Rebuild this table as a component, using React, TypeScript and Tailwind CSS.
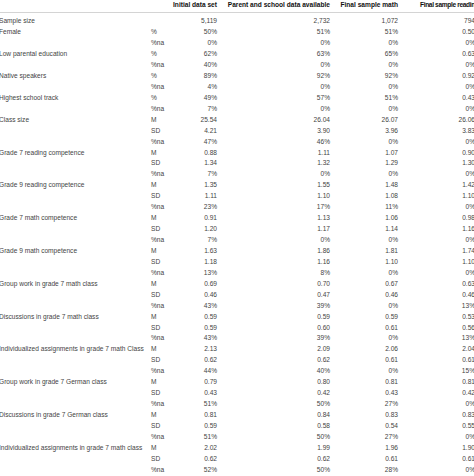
const columns = [
  "Initial data set",
  "Parent and school data available",
  "Final sample math",
];

type Row = [string, string, string, string, string, string];

const rows: Row[] = [
  ["Sample size", "", "5,119", "2,732", "1,072", "794"],
  ["Female", "%", "50%", "51%", "51%", "0.50"],
  ["", "%na", "0%", "0%", "0%", "0%"],
  ["Low parental education", "%", "62%", "63%", "65%", "0.63"],
  ["", "%na", "40%", "0%", "0%", "0%"],
  ["Native speakers", "%", "89%", "92%", "92%", "0.92"],
  ["", "%na", "4%", "0%", "0%", "0%"],
  ["Highest school track", "%", "49%", "57%", "51%", "0.43"],
  ["", "%na", "7%", "0%", "0%", "0%"],
  ["Class size", "M", "25.54", "26.04", "26.07", "26.06"],
  ["", "SD", "4.21", "3.90", "3.96", "3.83"],
  ["", "%na", "47%", "46%", "0%", "0%"],
  ["Grade 7 reading competence", "M", "0.88", "1.11", "1.07", "0.90"],
  ["", "SD", "1.34", "1.32", "1.29", "1.30"],
  ["", "%na", "7%", "0%", "0%", "0%"],
  ["Grade 9 reading competence", "M", "1.35", "1.55", "1.48", "1.42"],
  ["", "SD", "1.11", "1.10", "1.08", "1.10"],
  ["", "%na", "23%", "17%", "11%", "0%"],
  ["Grade 7 math competence", "M", "0.91", "1.13", "1.06", "0.98"],
  ["", "SD", "1.20", "1.17", "1.14", "1.16"],
  ["", "%na", "7%", "0%", "0%", "0%"],
  ["Grade 9 math competence", "M", "1.63", "1.86", "1.81", "1.74"],
  ["", "SD", "1.18", "1.16", "1.10", "1.10"],
  ["", "%na", "13%", "8%", "0%", "0%"],
  ["Group work in grade 7 math class", "M", "0.69", "0.70", "0.67", "0.63"],
  ["", "SD", "0.46", "0.47", "0.46", "0.46"],
  ["", "%na", "43%", "39%", "0%", "13%"],
  ["Discussions in grade 7 math class", "M", "0.59", "0.59", "0.59", "0.53"],
  ["", "SD", "0.59", "0.60", "0.61", "0.56"],
  ["", "%na", "43%", "39%", "0%", "13%"],
  ["Individualized assignments in grade 7 math Class", "M", "2.13", "2.09", "2.06", "2.04"],
  ["", "SD", "0.62", "0.62", "0.61", "0.61"],
  ["", "%na", "44%", "40%", "0%", "15%"],
  ["Group work in grade 7 German class", "M", "0.79", "0.80", "0.81", "0.81"],
  ["", "SD", "0.43", "0.42", "0.43", "0.42"],
  ["", "%na", "51%", "50%", "27%", "0%"],
  ["Discussions in grade 7 German class", "M", "0.81", "0.84", "0.83", "0.83"],
  ["", "SD", "0.59", "0.58", "0.54", "0.55"],
  ["", "%na", "51%", "50%", "27%", "0%"],
  ["Individualized assignments in grade 7 math class", "M", "2.02", "1.99", "1.96", "1.90"],
  ["", "SD", "0.62", "0.62", "0.61", "0.61"],
  ["", "%na", "52%", "50%", "28%", "0%"],
];

const grid = "grid grid-cols-[151px_20px_47px_113px_68px_77px]";

export default function App() {
  return (
    <main
      className="h-[476px] w-[474px] overflow-hidden bg-white text-[6.6px]"
      style={{ fontFamily: '"Liberation Sans", Arial, sans-serif' }}
    >
      <div className="-ml-px w-[476px]">
        <div className={`${grid} h-[13px] border-b border-[#d4d4d4] font-bold leading-[9px] text-[#111]`}>
          <div />
          <div />
          {columns.map((c) => (
            <div key={c} className="whitespace-nowrap text-right">
              {c}
            </div>
          ))}
          <div className="whitespace-nowrap pl-[22px] text-left tracking-[-0.35px]">
            Final sample reading
          </div>
        </div>

        <div className="pt-[3.3px] text-[#444]">
          {rows.map((r, i) => (
            <div key={i} className={`${grid} h-[10.95px] leading-[10.95px]`}>
              <div className="whitespace-nowrap">{r[0]}</div>
              <div className="whitespace-nowrap pl-px">{r[1]}</div>
              <div className="text-right">{r[2]}</div>
              <div className="text-right">{r[3]}</div>
              <div className="text-right">{r[4]}</div>
              <div className="text-right">{r[5]}</div>
            </div>
          ))}
        </div>
      </div>
    </main>
  );
}
